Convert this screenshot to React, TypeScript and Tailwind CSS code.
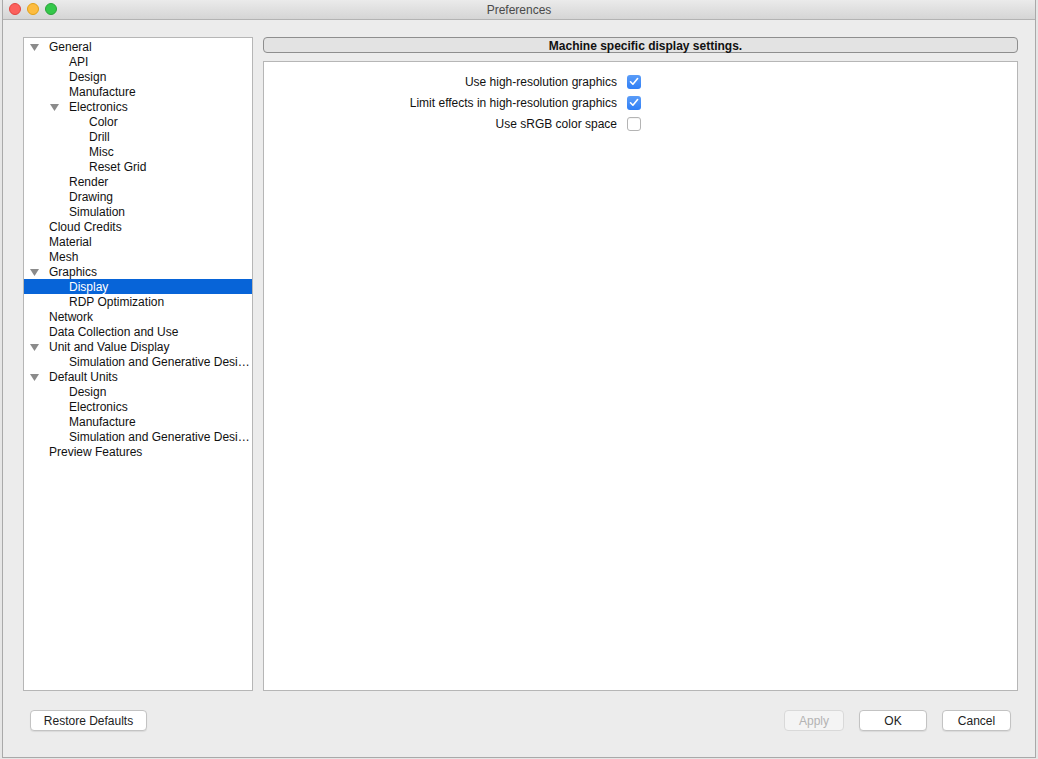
import React from "react";

type TreeItem = {
  label: string;
  level: number;
  expanded?: boolean;
  selected?: boolean;
};

const tree: TreeItem[] = [
  { label: "General", level: 0, expanded: true },
  { label: "API", level: 1 },
  { label: "Design", level: 1 },
  { label: "Manufacture", level: 1 },
  { label: "Electronics", level: 1, expanded: true },
  { label: "Color", level: 2 },
  { label: "Drill", level: 2 },
  { label: "Misc", level: 2 },
  { label: "Reset Grid", level: 2 },
  { label: "Render", level: 1 },
  { label: "Drawing", level: 1 },
  { label: "Simulation", level: 1 },
  { label: "Cloud Credits", level: 0 },
  { label: "Material", level: 0 },
  { label: "Mesh", level: 0 },
  { label: "Graphics", level: 0, expanded: true },
  { label: "Display", level: 1, selected: true },
  { label: "RDP Optimization", level: 1 },
  { label: "Network", level: 0 },
  { label: "Data Collection and Use", level: 0 },
  { label: "Unit and Value Display", level: 0, expanded: true },
  { label: "Simulation and Generative Desi…", level: 1 },
  { label: "Default Units", level: 0, expanded: true },
  { label: "Design", level: 1 },
  { label: "Electronics", level: 1 },
  { label: "Manufacture", level: 1 },
  { label: "Simulation and Generative Desi…", level: 1 },
  { label: "Preview Features", level: 0 },
];

const settings = [
  { label: "Use high-resolution graphics", checked: true },
  { label: "Limit effects in high-resolution graphics", checked: true },
  { label: "Use sRGB color space", checked: false },
];

function Disclosure() {
  return (
    <svg width="9" height="7" viewBox="0 0 9 7" className="block">
      <polygon points="0,0 9,0 4.5,7" fill="#8b8b8b" />
    </svg>
  );
}

function Checkbox({ checked }: { checked: boolean }) {
  if (!checked) {
    return (
      <span className="block size-[14px] rounded-[3px] border border-[#b4b4b4] bg-white shadow-[inset_0_1px_0_rgba(0,0,0,0.04)]" />
    );
  }
  return (
    <span className="flex size-[14px] items-center justify-center rounded-[3px] bg-gradient-to-b from-[#5a9cf8] to-[#2f7ff6]">
      <svg width="10" height="9" viewBox="0 0 10 9">
        <path
          d="M1.5 4.8 L3.9 7.2 L8.6 1.6"
          fill="none"
          stroke="white"
          strokeWidth="1.6"
          strokeLinecap="round"
          strokeLinejoin="round"
        />
      </svg>
    </span>
  );
}

function Button({
  children,
  width,
  disabled,
}: {
  children: React.ReactNode;
  width: string;
  disabled?: boolean;
}) {
  return (
    <button
      type="button"
      disabled={disabled}
      className={
        "flex h-[21px] items-center justify-center rounded-[4px] border text-[12px] leading-none " +
        width +
        (disabled
          ? " border-[#d9d9d9] bg-[#f4f4f4] text-[#b3b3b3]"
          : " border-[#c3c3c3] bg-white text-[#222] shadow-[0_1px_1px_rgba(0,0,0,0.08)]")
      }
    >
      {children}
    </button>
  );
}

export default function App() {
  return (
    <div className="h-[759px] w-[1038px] overflow-hidden bg-[#e6e6e6] font-['Liberation_Sans',Arial,sans-serif] text-[12px] text-[#111]">
      <div className="mx-[2px] flex h-[758px] flex-col border-x border-b border-[#a9a9a9] bg-[#ececec]">
        {/* title bar */}
        <div className="relative flex h-[20px] shrink-0 items-center justify-center border-b border-[#b3b3b3] bg-gradient-to-b from-[#ebebeb] to-[#d5d5d5]">
          <div className="absolute left-[6px] top-[3px] flex gap-[6px]">
            <span className="size-[12px] rounded-full border border-[#e2463f] bg-[#fc605c]" />
            <span className="size-[12px] rounded-full border border-[#e1a116] bg-[#fdbc40]" />
            <span className="size-[12px] rounded-full border border-[#2ba33a] bg-[#34c84a]" />
          </div>
          <span className="text-[12px] text-[#4a4a4a]">Preferences</span>
        </div>

        {/* panels */}
        <div className="flex gap-[10px] pl-[20px] pr-[17px] pt-[17px]">
          <div className="h-[654px] w-[230px] shrink-0 overflow-hidden border border-[#b6b6b6] bg-white pt-[1px]">
            {tree.map((item, i) => (
              <div
                key={i}
                className={
                  "flex h-[15px] items-center whitespace-nowrap " +
                  (item.selected ? "bg-[#0764d8] text-white" : "text-[#111]")
                }
                style={{ paddingLeft: item.level * 20 }}
              >
                <span className="flex w-[25px] shrink-0 pl-[6px] pt-[1px]">
                  {item.expanded ? <Disclosure /> : null}
                </span>
                <span className="pt-[1px]">{item.label}</span>
              </div>
            ))}
          </div>

          <div className="flex min-w-0 flex-1 flex-col gap-[8px]">
            <div className="flex h-[16px] items-center justify-center rounded-[4px] border border-[#8e8e8e] bg-[#e3e3e3] pl-[10px] pt-[1px] text-[12px] font-bold text-[#111]">
              Machine specific display settings.
            </div>
            <div className="h-[630px] border border-[#b6b6b6] bg-white pt-[9px]">
              <div className="grid grid-cols-[353px_14px] gap-x-[10px]">
                {settings.map((s) => (
                  <React.Fragment key={s.label}>
                    <div className="flex h-[21px] items-center justify-end text-[#111]">
                      {s.label}
                    </div>
                    <div className="flex h-[21px] items-center">
                      <Checkbox checked={s.checked} />
                    </div>
                  </React.Fragment>
                ))}
              </div>
            </div>
          </div>
        </div>

        {/* buttons */}
        <div className="flex items-center pl-[27px] pr-[24px] pt-[19px]">
          <Button width="w-[117px]">Restore Defaults</Button>
          <div className="ml-auto flex gap-[15px]">
            <Button width="w-[60px]" disabled>
              Apply
            </Button>
            <Button width="w-[68px]">OK</Button>
            <Button width="w-[69px]">Cancel</Button>
          </div>
        </div>
      </div>
    </div>
  );
}
